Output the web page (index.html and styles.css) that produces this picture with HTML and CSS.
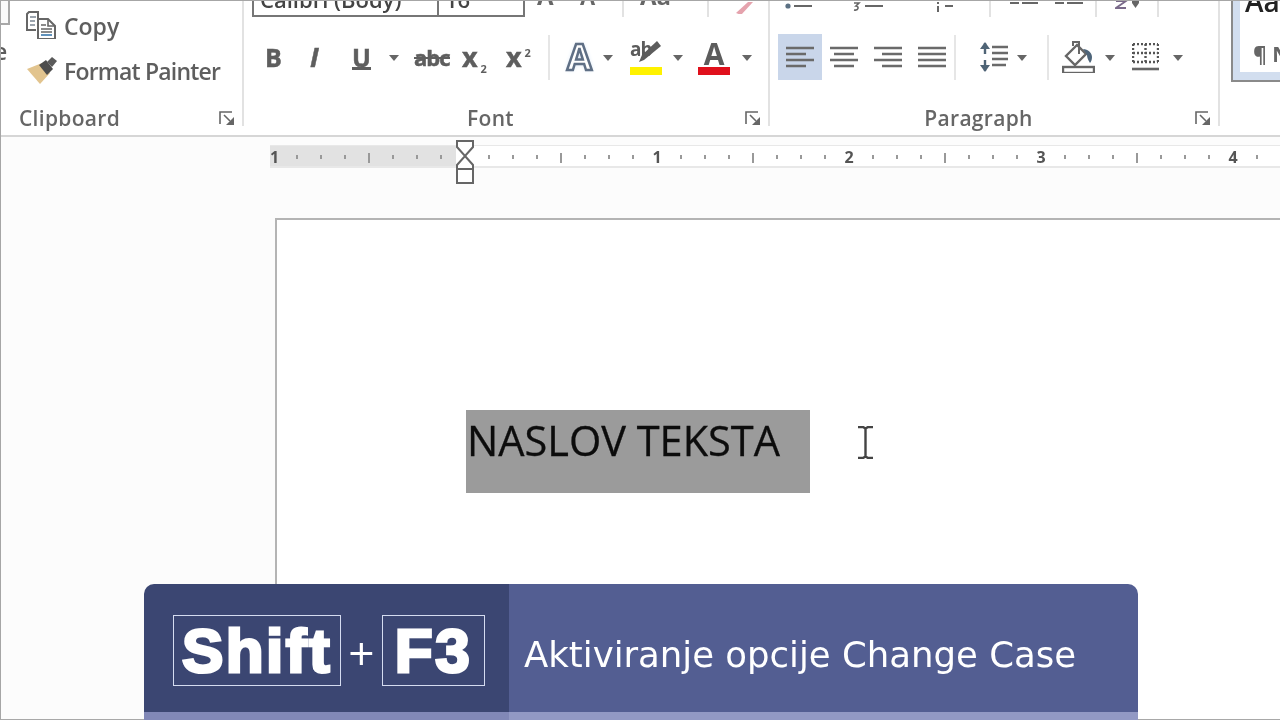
FILE: index.html
```html
<!DOCTYPE html>
<html lang="hr">
<head>
<meta charset="utf-8">
<title>Change Case</title>
<link rel="stylesheet" href="styles.css">
</head>
<body>
<div class="app">
  <header class="ribbon">
    <section class="group clipboard">
      <div class="paste-edge"></div>
      <div class="paste-letter">e</div>
      <div class="clip-row copy-row">
        <svg class="ico-copy" viewBox="0 0 30 28"><path d="M12 8V1H3L1 3v16h9" fill="none" stroke="#666" stroke-width="2"/><path d="M4 6h6M4 10h5M4 14h5" stroke="#7b8794" stroke-width="1.6"/><path d="M12 8h10l7 7v13H12z" fill="#fff" stroke="#666" stroke-width="2"/><path d="M22 8v7h7" fill="none" stroke="#666" stroke-width="1.6"/><path d="M15 14h5M15 18h11M15 21h11" stroke="#666" stroke-width="1.5"/><path d="M15 24h11" stroke="#4f86b5" stroke-width="1.8"/></svg>
        <span>Copy</span>
      </div>
      <div class="clip-row painter-row">
        <svg class="ico-painter" viewBox="0 0 32 30"><path d="M1 13L16 7l8 10-10 11z" fill="#e2c48e"/><path d="M13 9l7-5 7 9-6 6z" fill="#4d4d4d"/><path d="M21 6l5-5 5 4-5 6z" fill="#5a5a5a"/></svg>
        <span>Format Painter</span>
      </div>
      <div class="label-row label-left">
        <span class="label">Clipboard</span>
        <svg class="launcher" viewBox="0 0 16 15"><path d="M1 13V1h12" fill="none" stroke="#666" stroke-width="1.6"/><path d="M5 4l6 6" stroke="#666" stroke-width="1.6"/><path d="M15 6v8H7z" fill="#666"/></svg>
      </div>
    </section>

    <section class="group font">
      <div class="top-row font-top">
        <div class="combo combo-name"><span>Calibri (Body)</span></div>
        <div class="combo combo-size"><span>16</span></div>
        <span class="top-glyph first-glyph">A</span>
        <span class="top-glyph small">A</span>
        <i class="top-sep sep-a"></i>
        <span class="top-glyph">Aa</span>
        <i class="top-sep"></i>
        <svg class="eraser" viewBox="0 0 24 12"><path d="M6 11L18 0h5L11 13z" fill="#e5a3ad"/></svg>
      </div>
      <div class="tool-row font-tools">
        <span class="fmt bold">B</span>
        <span class="fmt ital">I</span>
        <span class="fmt under">U</span>
        <i class="caret"></i>
        <span class="fmt strike">abc</span>
        <span class="fmt xs">x<sub>2</sub></span>
        <span class="fmt xs">x<sup>2</sup></span>
        <i class="sep"></i>
        <span class="effect">A</span>
        <i class="caret"></i>
        <span class="colour">
          <span class="hl-text">ab</span>
          <svg class="marker" viewBox="0 0 26 22"><path d="M2 21l5-2 17-14-4-5L5 14z" fill="#5c5c5c"/></svg>
          <i class="bar yellow"></i>
        </span>
        <i class="caret"></i>
        <span class="colour">
          <span class="fc-text">A</span>
          <i class="bar red"></i>
        </span>
        <i class="caret"></i>
      </div>
      <div class="label-row">
        <span class="label">Font</span>
        <svg class="launcher" viewBox="0 0 16 15"><path d="M1 13V1h12" fill="none" stroke="#666" stroke-width="1.6"/><path d="M5 4l6 6" stroke="#666" stroke-width="1.6"/><path d="M15 6v8H7z" fill="#666"/></svg>
      </div>
    </section>

    <section class="group para">
      <div class="top-row para-top">
        <svg class="first-top" viewBox="0 0 30 12"><circle cx="3" cy="5" r="2.6" fill="#5b7083"/><path d="M9 5h18" stroke="#666" stroke-width="2"/></svg>
        <svg viewBox="0 0 30 12"><path d="M12 5h18" stroke="#666" stroke-width="2"/><path d="M1 2h5L3 5c3 0 3 5-2 4" fill="none" stroke="#666" stroke-width="1.6"/></svg>
        <svg viewBox="0 0 30 12"><path d="M3 1v2M3 5v6M10 5h8" stroke="#666" stroke-width="2"/></svg>
        <i class="top-sep"></i>
        <svg viewBox="0 0 30 12"><path d="M0 2h9M12 2h16" stroke="#666" stroke-width="2"/></svg>
        <svg viewBox="0 0 30 12"><path d="M0 2h9M12 2h16" stroke="#666" stroke-width="2"/></svg>
        <i class="top-sep"></i>
        <svg viewBox="0 0 30 12"><path d="M1 0h10L1 7h10" fill="none" stroke="#7a6a8a" stroke-width="1.8"/><path d="M17 0h7v2l-3.500 5-3.500-5z" fill="#666"/></svg>
        <i class="top-sep"></i>
        <svg viewBox="0 0 30 12"><path d="M2 0v5M7 0v5" stroke="#666" stroke-width="2"/></svg>
      </div>
      <div class="tool-row para-tools">
        <span class="align active"><svg viewBox="0 0 28 22"><path d="M0 2h28M0 8h20M0 14h28M0 20h20" stroke="#6a6a6a" stroke-width="2.600"/></svg></span>
        <span class="align"><svg viewBox="0 0 28 22"><path d="M0 2h28M4 8h20M0 14h28M4 20h20" stroke="#6a6a6a" stroke-width="2.600"/></svg></span>
        <span class="align"><svg viewBox="0 0 28 22"><path d="M0 2h28M8 8h20M0 14h28M8 20h20" stroke="#6a6a6a" stroke-width="2.600"/></svg></span>
        <span class="align"><svg viewBox="0 0 28 22"><path d="M0 2h28M0 8h28M0 14h28M0 20h28" stroke="#6a6a6a" stroke-width="2.600"/></svg></span>
        <i class="sep"></i>
        <svg class="ico-spacing" viewBox="0 0 28 32"><path d="M5 2v11M5 19v11" stroke="#4f6476" stroke-width="2.400"/><path d="M0 8l5-7 5 7zM0 24l5 7 5-7z" fill="#4f6476"/><path d="M12 6h16M12 12h16M12 18h16M12 24h14" stroke="#6a6a6a" stroke-width="2.600"/></svg>
        <i class="caret"></i>
        <i class="sep"></i>
        <svg class="ico-shading" viewBox="0 0 33 32"><path d="M15 4l-11 11 9 9 11-11z" fill="#fff" stroke="#666" stroke-width="2.400"/><path d="M11 5V1h6v12" fill="none" stroke="#666" stroke-width="2"/><path d="M21 8c5 0 9 4 9 8 0 3-1 5-2 6-2-3-3-6-3-8z" fill="#4d6479"/><rect x="1" y="26" width="31" height="6" fill="#fff" stroke="#666" stroke-width="2.400"/></svg>
        <i class="caret"></i>
        <svg class="ico-borders" viewBox="0 0 27 28"><path d="M1 1h25M1 10h25M1 19h25M1 1v19M13.500 1v19M26 1v19" fill="none" stroke="#555" stroke-width="2.400" stroke-dasharray="2 2"/><path d="M0 26h27" stroke="#666" stroke-width="2.600"/></svg>
        <i class="caret"></i>
      </div>
      <div class="label-row">
        <span class="label">Paragraph</span>
        <svg class="launcher" viewBox="0 0 16 15"><path d="M1 13V1h12" fill="none" stroke="#666" stroke-width="1.6"/><path d="M5 4l6 6" stroke="#666" stroke-width="1.6"/><path d="M15 6v8H7z" fill="#666"/></svg>
      </div>
    </section>

    <section class="styles">
      <div class="style-frame">
        <div class="style-inner">
          <span class="style-aa">Aa</span>
          <span class="style-p">¶ N</span>
        </div>
      </div>
    </section>
  </header>

  <main class="workspace">
    <div class="ruler">
      <span class="cell first">1</span>
      <span class="cell"><i class="t"></i></span><span class="cell"><i class="t"></i></span><span class="cell"><i class="t"></i></span><span class="cell"><i class="l"></i></span><span class="cell"><i class="t"></i></span><span class="cell"><i class="t"></i></span><span class="cell"><i class="t"></i></span>
      <span class="cell"></span>
      <span class="cell"><i class="t"></i></span><span class="cell"><i class="t"></i></span><span class="cell"><i class="t"></i></span><span class="cell"><i class="l"></i></span><span class="cell"><i class="t"></i></span><span class="cell"><i class="t"></i></span><span class="cell"><i class="t"></i></span>
      <span class="cell">1</span>
      <span class="cell"><i class="t"></i></span><span class="cell"><i class="t"></i></span><span class="cell"><i class="t"></i></span><span class="cell"><i class="l"></i></span><span class="cell"><i class="t"></i></span><span class="cell"><i class="t"></i></span><span class="cell"><i class="t"></i></span>
      <span class="cell">2</span>
      <span class="cell"><i class="t"></i></span><span class="cell"><i class="t"></i></span><span class="cell"><i class="t"></i></span><span class="cell"><i class="l"></i></span><span class="cell"><i class="t"></i></span><span class="cell"><i class="t"></i></span><span class="cell"><i class="t"></i></span>
      <span class="cell">3</span>
      <span class="cell"><i class="t"></i></span><span class="cell"><i class="t"></i></span><span class="cell"><i class="t"></i></span><span class="cell"><i class="l"></i></span><span class="cell"><i class="t"></i></span><span class="cell"><i class="t"></i></span><span class="cell"><i class="t"></i></span>
      <span class="cell">4</span>
      <span class="cell"><i class="t"></i></span>
      <svg class="indent" viewBox="0 0 18 44"><path d="M1 1h16v6L9 16 1 7zM9 16l8 9v4H1v-4z" fill="#fff" stroke="#666" stroke-width="2"/><rect x="1" y="29" width="16" height="14" fill="#fff" stroke="#666" stroke-width="2"/></svg>
    </div>
    <div class="page">
      <div class="line">
        <div class="selection">NASLOV TEKSTA</div>
        <svg class="ibeam" viewBox="0 0 15 33"><path d="M0 1h5l2.500 1.500L10 1h5M0 32h5l2.500-1.500L10 32h5M7.500 2v29" fill="none" stroke="#444" stroke-width="2.400"/></svg>
      </div>
    </div>
  </main>

  <aside class="banner">
    <div class="keys">
      <kbd class="key key-shift">Shift</kbd>
      <span class="plus">+</span>
      <kbd class="key key-f3">F3</kbd>
    </div>
    <div class="caption">Aktiviranje opcije Change Case</div>
  </aside>
</div>
</body>
</html>
```
FILE: styles.css
```css
* { box-sizing: border-box; }
html, body { margin: 0; padding: 0; height: 720px; overflow: hidden; background: #fcfcfc; }
i { display: block; font-style: normal; }

.app {
  position: relative;
  width: 1280px;
  height: 720px;
  display: flex;
  flex-direction: column;
  overflow: hidden;
  border-left: 1px solid #a6a6a6;
  font-family: "Open Sans", "Noto Sans", sans-serif;
  color: #5c5c5c;
  filter: blur(0.45px);
}

/* Ribbon */
.ribbon {
  flex: none;
  height: 137px;
  display: flex;
  align-items: flex-start;
  background: #fff;
  border-top: 1px solid #a6a6a6;
  border-bottom: 2px solid #d6d6d6;
  overflow: hidden;
}
.group {
  position: relative;
  flex: none;
  height: 125px;
  display: flex;
  flex-direction: column;
  border-right: 2px solid #e2e2e2;
}
.clipboard { width: 243px; padding-top: 14px; }
.font { width: 526px; }
.para { width: 450px; }

.paste-edge {
  position: absolute;
  left: -2px; top: -2px;
  width: 11px; height: 26px;
  border: 2px solid #a8a8a8;
  background: #fafafa;
}
.paste-letter {
  position: absolute;
  left: -7px; top: 34px;
  font-size: 23px;
  font-weight: 600;
}
.clip-row {
  display: flex;
  align-items: center;
  gap: 8px;
  padding-left: 25px;
  font-size: 23px;
  font-weight: 600;
  line-height: 30px;
  color: #5e5e5e;
}
.ico-copy { width: 30px; height: 28px; margin-top: -6px; }
.copy-row span { margin-top: -4px; }
.painter-row { margin-top: 15px; gap: 6px; letter-spacing: -0.8px; }
.ico-painter { width: 32px; height: 30px; }

.label-row {
  display: flex;
  align-items: center;
  gap: 8px;
  height: 26px;
  margin-top: auto;
  margin-bottom: -5px;
  padding-right: 7px;
}
.label { flex: 1; text-align: center; font-size: 21px; font-weight: 600; letter-spacing: 0.3px; color: #666; line-height: 26px; }
.label-left { padding-left: 18px; }
.label-left .label { text-align: left; }
.launcher { width: 16px; height: 15px; flex: none; }

/* Clipped first row */
.top-row {
  height: 16px;
  display: grid;
  grid-template-rows: 16px;
  align-items: end;
  overflow: hidden;
  flex: none;
}
.font-top { grid-template-columns: 8px 187px 86px 12px 43px 42px 18px 67px 23px 30px; }
.font-top .combo-name { grid-column: 2; }
.font-top .first-glyph { grid-column: 5; }
.combo {
  height: 16px;
  display: flex;
  align-items: flex-end;
  border: 2px solid #767676;
  border-top: 0;
  padding: 0 0 5px 6px;
  font-size: 22px;
  line-height: 22px;
  font-weight: 600;
  color: #444;
  white-space: nowrap;
}
.combo-size { border-left: 0; }
.top-glyph { font-size: 24px; font-weight: 700; line-height: 24px; margin-bottom: 9px; color: #666; }
.top-glyph.small { font-size: 22px; }
.top-sep { width: 2px; height: 16px; background: #e2e2e2; }
.eraser { width: 24px; height: 12px; margin-bottom: 3px; }

.para-top { grid-template-columns: 15px 68px 82px 54px 21px 45px 40px 20px 42px 30px; }
.para-top svg { width: 30px; height: 12px; align-self: start; }
.para-top .first-top { grid-column: 1 / span 2; margin-left: 15px; }

/* Tool rows */
.tool-row {
  height: 46px;
  margin-top: 17px;
  display: grid;
  align-items: center;
  justify-items: start;
  flex: none;
}
.font-tools { grid-template-columns: 21px 45px 42px 37px 25px 48px 44px 42px 19px 36px 27px 43px 25px 44px 20px; }
.font-tools > :first-child { grid-column: 2; }
.para-tools { grid-template-columns: 44px 44px 44px 44px 8px 18px 37px 30px 15px 43px 27px 41px 20px; padding-left: 8px; }
.para-tools .ico-spacing { grid-column: 7; }
.fmt { font-size: 25px; font-weight: 700; line-height: 46px; color: #5e5e5e; -webkit-text-stroke: 0.5px #5e5e5e; }
.ital { font-style: italic; font-size: 27px; }
.under { position: relative; }
.under::after {
  content: "";
  position: absolute;
  left: 0; right: 0; bottom: 10px;
  height: 3px;
  background: #5e5e5e;
}
.strike { position: relative; font-size: 22px; letter-spacing: -1px; }
.strike::after {
  content: "";
  position: absolute;
  left: 0; right: 0; top: 23px;
  height: 2px;
  background: #5e5e5e;
}
.xs { font-size: 27px; }
.xs sub, .xs sup { font-size: 11px; line-height: 0; margin-left: 3px; -webkit-text-stroke: 0; }
.sep { width: 2px; height: 45px; background: #e6e6e6; }
.caret {
  width: 0; height: 0;
  border-left: 5.5px solid transparent;
  border-right: 5.5px solid transparent;
  border-top: 6px solid #666;
  margin-top: 2px;
}
.effect {
  font-size: 36px;
  line-height: 46px;
  font-weight: 700;
  color: #fff;
  -webkit-text-stroke: 2.5px #5f6f85;
  text-shadow: 0 0 5px #cfe0f3;
}
.colour { position: relative; display: block; width: 32px; height: 36px; }
.hl-text {
  position: absolute;
  left: 0; top: 0;
  font-size: 19px; font-weight: 700; line-height: 20px;
  letter-spacing: -1px;
}
.marker { position: absolute; left: 7px; top: 2px; width: 26px; height: 22px; }
.fc-text {
  position: absolute;
  left: 0; right: 0; top: 2px;
  text-align: center;
  font-size: 30px; font-weight: 700; line-height: 26px;
}
.bar { position: absolute; left: 0; bottom: 0; width: 32px; height: 8px; }
.yellow { background: #fff200; }
.red { background: #e0101c; }
.align { display: flex; align-items: center; justify-content: center; width: 44px; height: 46px; }
.align svg { width: 28px; height: 22px; }
.align.active { background: #c9d6ea; }
.ico-spacing { width: 28px; height: 32px; }
.ico-shading { width: 33px; height: 32px; }
.ico-borders { width: 27px; height: 28px; }

/* Styles gallery */
.styles { flex: 1; padding-left: 11px; overflow: hidden; height: 125px; }
.style-frame {
  height: 81px;
  border-left: 2px solid #8a8a8a;
  border-bottom: 2px solid #8a8a8a;
}
.style-inner {
  height: 79px;
  display: flex;
  flex-direction: column;
  overflow: hidden;
  border-left: 7px solid #d2deef;
  border-bottom: 8px solid #d2deef;
  padding-left: 5px;
}
.style-aa { font-size: 28px; line-height: 34px; margin-top: -17px; font-weight: 600; color: #222; white-space: nowrap; }
.style-p { font-size: 21px; line-height: 26px; margin-top: 23px; padding-left: 8px; font-weight: 700; color: #666; white-space: nowrap; }

/* Workspace */
.workspace {
  flex: 1;
  display: flex;
  flex-direction: column;
  padding: 8px 0 0 269px;
  background: #fcfcfc;
  border-bottom: 1px solid #a8a8a8;
  min-height: 0;
}
.ruler {
  position: relative;
  flex: none;
  height: 23px;
  display: flex;
  background: linear-gradient(to right, #e2e2e2 186px, #fff 186px);
  border-top: 1px solid #e8e8e8;
  border-bottom: 2px solid #e8e8e8;
  margin-right: -1px;
  font-size: 16px;
  font-weight: 700;
  color: #555;
}
.cell {
  flex: none;
  width: 24px;
  height: 22px;
  display: flex;
  align-items: center;
  justify-content: center;
  line-height: 22px;
}
.cell.first { width: 15px; justify-content: flex-start; }
.t { width: 2px; height: 4px; background: #999; }
.l { width: 2px; height: 10px; background: #999; margin-top: 2px; }
.indent {
  position: absolute;
  left: 186px; top: -6px;
  width: 18px; height: 44px;
}
.page {
  flex: 1;
  margin: 50px 0 0 5px;
  padding: 190px 0 0 189px;
  background: #fff;
  border-left: 2px solid #b4b4b4;
  border-top: 2px solid #b4b4b4;
}
.line { display: flex; align-items: flex-start; gap: 48px; }
.selection {
  width: 344px;
  height: 83px;
  background: #9b9b9b;
  color: #0c0c0c;
  font-size: 41.5px;
  line-height: 60px;
  padding-left: 1px;
  white-space: nowrap;
  -webkit-text-stroke: 0.3px #0c0c0c;
}
.ibeam { width: 15px; height: 33px; margin-top: 16px; flex: none; }

/* Banner */
.banner {
  position: absolute;
  left: 143px; top: 584px;
  width: 994px; height: 136px;
  display: flex;
  border-radius: 10px 10px 0 0;
  overflow: hidden;
  color: #fff;
}
.keys {
  flex: none;
  width: 365px;
  display: flex;
  align-items: flex-start;
  padding: 31px 0 0 29px;
  background: #3b4672;
  border-bottom: 8px solid #8188b7;
}
.key {
  display: flex;
  align-items: center;
  justify-content: center;
  height: 71px;
  border: 1px solid #d5dcf0;
  font-family: "Liberation Sans", Arial, sans-serif;
  font-size: 62px;
  font-weight: 700;
  letter-spacing: 2.5px;
  -webkit-text-stroke: 3px #fff;
  color: #fff;
}
.key-shift { width: 168px; }
.key-f3 { width: 103px; }
.plus {
  width: 41px;
  text-align: center;
  font-size: 46px;
  line-height: 74px;
  font-weight: 400;
}
.caption {
  flex: 1;
  padding: 47px 0 0 15px;
  background: #535e92;
  border-bottom: 8px solid #9299c4;
  font-family: "DejaVu Sans", sans-serif;
  font-size: 35.5px;
  line-height: 48px;
  white-space: nowrap;
}
```
